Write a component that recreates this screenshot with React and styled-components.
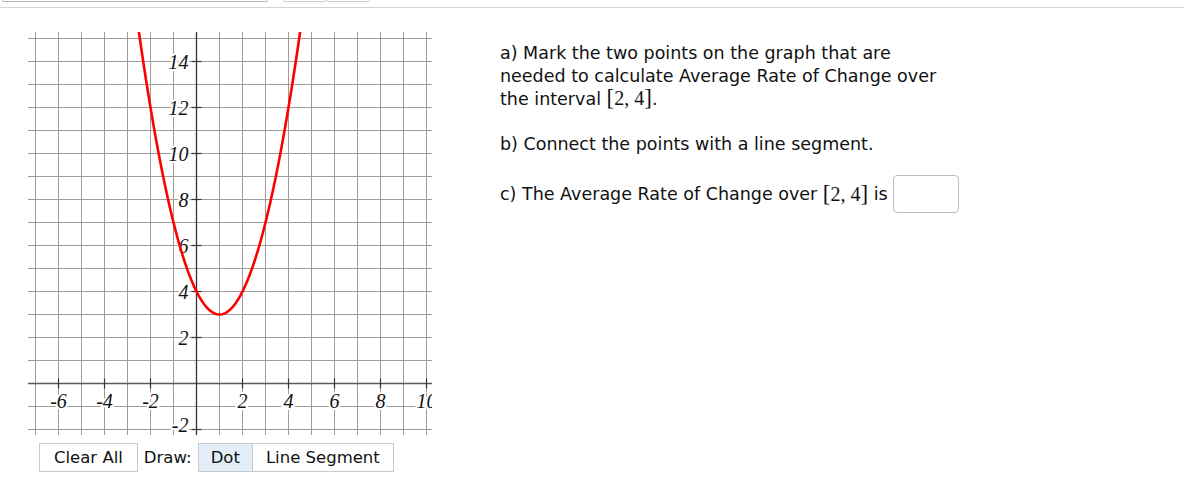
import React from "react";
import styled, { createGlobalStyle } from "styled-components";

const Global = createGlobalStyle`
  html, body { margin: 0; padding: 0; background: #fff; }
  body { font-family: "DejaVu Sans", "Open Sans", sans-serif; color: #111; }
`;

const Page = styled.div`
  width: 1184px;
  height: 490px;
  overflow: hidden;
`;

const TopStrip = styled.div`
  height: 7px;
  border-bottom: 1px solid #d3d3d3;
  display: flex;
  align-items: flex-start;
`;

const StubGroup = styled.div`
  display: flex;
  margin-left: ${(p) => p.$ml || 0}px;
`;

const Stub = styled.div`
  width: ${(p) => p.$w}px;
  height: 2px;
  box-sizing: border-box;
  border: 1px solid ${(p) => p.$c || "#b5b5b5"};
  border-top: none;
  border-radius: 0 0 3px 3px;
`;

const Main = styled.div`
  display: flex;
  align-items: flex-start;
  padding: 24px 0 0 28px;
  gap: 68px;
`;

const GraphColumn = styled.div`
  display: flex;
  flex-direction: column;
`;

const GraphSvg = styled.svg`
  display: block;
  overflow: hidden;
`;

const ButtonRow = styled.div`
  display: flex;
  align-items: center;
  margin-top: 8px;
  padding-left: 11px;
  font-size: 16.5px;
`;

const Button = styled.button`
  height: 29px;
  box-sizing: border-box;
  padding: 0 ${(p) => p.$pad || 12}px;
  border: 1px solid #c9c9c9;
  background: ${(p) => (p.$active ? "#e4eef8" : "#fff")};
  font-family: inherit;
  font-size: 16.5px;
  color: #111;
  margin: 0;
  border-radius: 0;
  & + & {
    border-left: none;
  }
`;

const Segmented = styled.div`
  display: flex;
`;

const DrawLabel = styled.span`
  margin: 0 6px;
`;

const Questions = styled.div`
  padding-top: 10px;
  font-size: 17.5px;
  line-height: 22.5px;
  width: 445px;
`;

const Para = styled.p`
  margin: 0 0 ${(p) => p.$mb || 0}px 0;
`;

const AnswerRow = styled.div`
  display: flex;
  align-items: center;
  height: 38px;
  white-space: nowrap;
`;

const Math = styled.span`
  font-family: "Liberation Serif", "DejaVu Serif", serif;
  font-size: 20px;
`;

const Bracket = styled.span`
  font-size: 23px;
`;

const AnswerBox = styled.div`
  width: 66px;
  height: 38px;
  box-sizing: border-box;
  border: 1px solid #bdbdbd;
  border-radius: 4px;
  margin-left: 5px;
  flex: none;
`;

const W = 404;
const H = 403;
const X = (x) => 168.5 + 23 * x;
const Y = (y) => 351.5 - 23 * y;

function Graph() {
  const vLines = [];
  for (let x = -7; x <= 10; x++) vLines.push(x);
  const hLines = [];
  for (let y = -2; y <= 15; y++) hLines.push(y);
  const xLabels = [-6, -4, -2, 2, 4, 6, 8, 10];
  const yLabels = [14, 12, 10, 8, 6, 4, 2, -2];

  const pts = [];
  for (let x = -2.7; x <= 4.7; x += 0.05) {
    const y = (x - 1) * (x - 1) + 3;
    pts.push(`${X(x).toFixed(2)},${Y(y).toFixed(2)}`);
  }

  const labelStyle = {
    fontFamily: '"Liberation Serif", "DejaVu Serif", serif',
    fontStyle: "italic",
    fontSize: 20,
  };

  return (
    <GraphSvg width={W} height={H} viewBox={`0 0 ${W} ${H}`}>
      {hLines.map((y) => (
        <line key={"h" + y} x1={0} x2={W} y1={Y(y)} y2={Y(y)} stroke="#9c9c9c" strokeWidth="1" />
      ))}
      {vLines.map((x) => (
        <line key={"v" + x} x1={X(x)} x2={X(x)} y1={0} y2={H} stroke="#9c9c9c" strokeWidth="1" />
      ))}
      <line x1={0} x2={W} y1={Y(0)} y2={Y(0)} stroke="#5a5a5a" strokeWidth="1.6" />
      <line x1={X(0)} x2={X(0)} y1={0} y2={H} stroke="#333" strokeWidth="1.3" />
      {xLabels.map((x) => (
        <line key={"xt" + x} x1={X(x)} x2={X(x)} y1={Y(0) - 5} y2={Y(0) + 5} stroke="#333" strokeWidth="1.2" />
      ))}
      {yLabels.map((y) => (
        <line key={"yt" + y} x1={X(0) - 5} x2={X(0) + 5} y1={Y(y)} y2={Y(y)} stroke="#333" strokeWidth="1.2" />
      ))}
      {xLabels.map((x) => (
        <text
          key={"xl" + x}
          x={X(x)}
          y={Y(0) + 24}
          textAnchor="middle"
          fill="#111"
          stroke="#fff"
          strokeWidth="4"
          paintOrder="stroke"
          style={labelStyle}
        >
          {x}
        </text>
      ))}
      {yLabels.map((y) => (
        <text
          key={"yl" + y}
          x={X(0) - 8}
          y={Y(y) + (y < 0 ? 2 : 7)}
          textAnchor="end"
          fill="#111"
          stroke="#fff"
          strokeWidth="4"
          paintOrder="stroke"
          style={labelStyle}
        >
          {y}
        </text>
      ))}
      <polyline points={pts.join(" ")} fill="none" stroke="#ff0000" strokeWidth="2.6" strokeLinejoin="round" />
    </GraphSvg>
  );
}

export default function App() {
  return (
    <Page>
      <Global />
      <TopStrip>
        <StubGroup $ml={2}>
          <Stub $w={266} />
        </StubGroup>
        <StubGroup $ml={15}>
          <Stub $w={44} $c="#d0d0d0" />
          <Stub $w={43} $c="#d0d0d0" />
        </StubGroup>
      </TopStrip>
      <Main>
        <GraphColumn>
          <Graph />
          <ButtonRow>
            <Button $pad={14}>Clear All</Button>
            <DrawLabel>Draw:</DrawLabel>
            <Segmented>
              <Button $active>Dot</Button>
              <Button $pad={13}>Line Segment</Button>
            </Segmented>
          </ButtonRow>
        </GraphColumn>
        <Questions>
          <Para $mb={22}>
            a) Mark the two points on the graph that are needed to calculate Average Rate of Change over the
            interval{" "}
            <Math>
              <Bracket>[</Bracket>2, 4<Bracket>]</Bracket>
            </Math>
            .
          </Para>
          <Para $mb={20}>b) Connect the points with a line segment.</Para>
          <AnswerRow>
            c) The Average Rate of Change over&nbsp;
            <Math>
              <Bracket>[</Bracket>2, 4<Bracket>]</Bracket>
            </Math>
            &nbsp;is
            <AnswerBox />
          </AnswerRow>
        </Questions>
      </Main>
    </Page>
  );
}
